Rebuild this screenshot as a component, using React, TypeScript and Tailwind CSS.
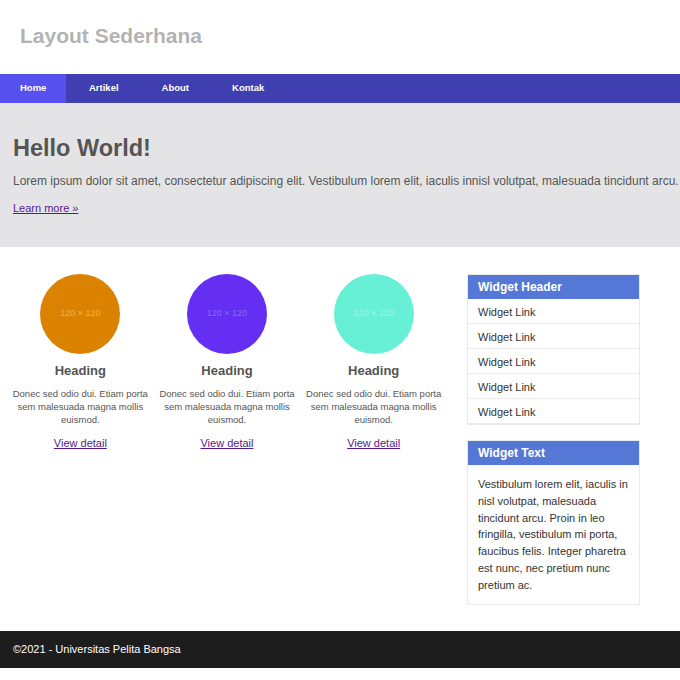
const NAV = ['Home', 'Artikel', 'About', 'Kontak'];

const CARDS = [
  { bg: 'bg-[#db8300]', label: 'text-[#f0b24a]' },
  { bg: 'bg-[#642ff3]', label: 'text-[#8a6af5]' },
  { bg: 'bg-[#68f0d6]', label: 'text-[#a2f5e4]' },
];

export default function App() {
  return (
    <div className="w-[680px] bg-white font-['Liberation_Sans',Arial,sans-serif] text-[#555]">
      <header className="h-[74px] px-5 pt-[23px]">
        <h1 className="text-[21px] font-bold leading-[26px] text-[#b3b3b3]">Layout Sederhana</h1>
      </header>

      <nav className="flex h-[29px] gap-[3px] bg-[#3f3fb1]">
        {NAV.map((n, i) => (
          <a key={n} href="#"
            className={`flex items-center px-5 text-[9.5px] font-bold text-white ${i === 0 ? 'bg-[#5650ef] w-[66px]' : ''}`}>
            {n}
          </a>
        ))}
      </nav>

      <section className="h-[144px] bg-[#e4e4e6] px-[13px] pt-[31px]">
        <h2 className="text-[23.5px] font-bold leading-[29px] text-[#555]">Hello World!</h2>
        <p className="mt-[10px] whitespace-nowrap text-[12px] leading-[16px]">
          Lorem ipsum dolor sit amet, consectetur adipiscing elit. Vestibulum lorem elit, iaculis innisl volutpat, malesuada tincidunt arcu.
        </p>
        <a href="#" className="mt-[11px] block text-[11px] text-[#551a8b] underline">Learn more »</a>
      </section>

      <main className="flex h-[384px] pt-[27px]">
        <div className="ml-[7px] grid w-[440px] grid-cols-3 self-start">
          {CARDS.map((c, i) => (
            <div key={i} className="flex flex-col items-center text-center">
              <div className={`flex h-20 w-20 items-center justify-center rounded-full ${c.bg}`}>
                <span className={`text-[9px] ${c.label}`}>120 × 120</span>
              </div>
              <h3 className="mt-[9px] text-[13px] font-bold leading-[16px] text-[#555]">Heading</h3>
              <p className="mt-[8px] text-[9.5px] leading-[13px] text-[#555]">
                Donec sed odio dui. Etiam porta sem malesuada magna mollis euismod.
              </p>
              <a href="#" className="mt-[9px] text-[11px] text-[#551a8b] underline">View detail</a>
            </div>
          ))}
        </div>

        <aside className="ml-[20px] flex w-[173px] flex-col gap-[15px]">
          <div className="border border-[#eaeaea]">
            <div className="bg-[#5577d6] px-[10px] py-[5px] text-[12px] font-bold leading-[14px] text-white">Widget Header</div>
            {Array.from({ length: 5 }).map((_, i) => (
              <div key={i} className="h-[25px] border-b border-[#ececec] px-[10px] pt-[2px] text-[11px] leading-[22px] text-[#333]">Widget Link</div>
            ))}
          </div>
          <div className="border border-[#eaeaea]">
            <div className="bg-[#5577d6] px-[10px] py-[5px] text-[12px] font-bold leading-[14px] text-white">Widget Text</div>
            <p className="px-[10px] pb-[10px] pt-[11px] text-[11px] leading-[16.8px] text-[#333]">
              Vestibulum lorem elit, iaculis in nisl volutpat, malesuada tincidunt arcu. Proin in leo fringilla, vestibulum mi porta, faucibus felis. Integer pharetra est nunc, nec pretium nunc pretium ac.
            </p>
          </div>
        </aside>
      </main>

      <footer className="flex h-[37px] items-center bg-[#1d1d1d] px-[13px] text-[11px] text-white">
        ©2021 - Universitas Pelita Bangsa
      </footer>
      <div className="h-[12px]" />
    </div>
  );
}
